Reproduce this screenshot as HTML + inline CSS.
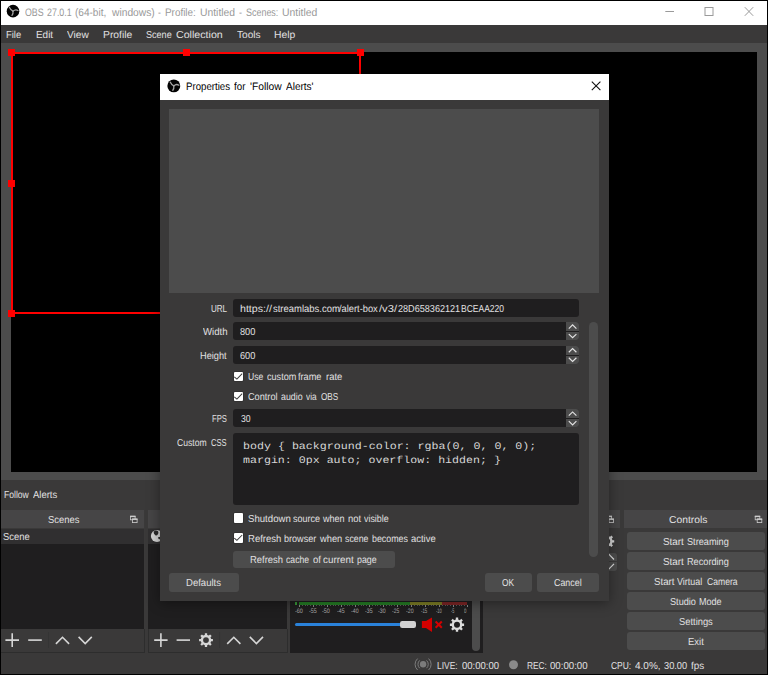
<!DOCTYPE html>
<html lang="en"><head><meta charset="utf-8"><title>OBS</title>
<style>
html,body{margin:0;padding:0}
body{width:768px;height:675px;position:relative;overflow:hidden;background:#000;font-family:"Liberation Sans",sans-serif}
div,span,svg{position:absolute;box-sizing:border-box}
.t{white-space:pre;text-rendering:geometricPrecision;transform-origin:0 0;display:block}
.s{font-family:"Liberation Sans",sans-serif}
.m{font-family:"Liberation Mono",monospace}
.btn{background:#4c4c4c;border-radius:3px}
.fld{background:#1f1e1f;border-radius:3px}
.hdr{background:#464546}
.lst{background:#1f1e1f}
.sel{background:#302f30}
.h{background:#ff0000;width:7px;height:7px}
.cb{background:#fff;width:9.6px;height:9.6px;border-radius:1px;box-shadow:0 0 0 0.6px #2c2c2c}

</style></head>
<body>
<!-- main window -->
<div id="titlebar" style="left:1px;top:1px;width:766px;height:24px;background:#fff"></div>
<div id="menubar" style="left:1px;top:25px;width:766px;height:18.3px;background:#3a3939"></div>
<div id="prevbg" style="left:1px;top:43.3px;width:766px;height:436.7px;background:#4c4c4c"></div>
<div id="preview" style="left:11px;top:52px;width:746px;height:420px;background:#000"></div>
<div id="lower" style="left:1px;top:480px;width:766px;height:194px;background:#3a3939"></div>
<!-- selection box -->
<div style="left:11px;top:52px;width:350px;height:2px;background:#f00"></div>
<div style="left:11px;top:312px;width:350px;height:2px;background:#f00"></div>
<div style="left:11px;top:52px;width:2px;height:262px;background:#f00"></div>
<div style="left:359px;top:52px;width:2px;height:262px;background:#f00"></div>
<div class="h" style="left:8px;top:49px"></div>
<div class="h" style="left:182.5px;top:49px"></div>
<div class="h" style="left:357px;top:49px"></div>
<div class="h" style="left:8px;top:179.5px"></div>
<div class="h" style="left:8px;top:310px"></div>
<!-- docks -->
<div class="hdr" style="left:1px;top:510px;width:143px;height:18px"></div>
<div class="lst" style="left:1px;top:528.5px;width:143px;height:100.5px"></div>
<div class="sel" style="left:1px;top:529px;width:143px;height:14.5px"></div>
<div class="hdr" style="left:148px;top:510px;width:139px;height:18px"></div>
<div class="lst" style="left:148px;top:528.5px;width:139px;height:100.5px"></div>
<div class="sel" style="left:148px;top:529px;width:139px;height:14.5px"></div>
<div class="hdr" style="left:290px;top:510px;width:193px;height:18px"></div>
<div class="lst" style="left:290px;top:528.5px;width:193px;height:124px"></div>
<div class="hdr" style="left:487px;top:510px;width:133.3px;height:18px"></div>
<div class="hdr" style="left:623.8px;top:510px;width:143.2px;height:18px"></div>
<!-- controls buttons -->
<div class="btn" style="left:626.8px;top:531.5px;width:138.4px;height:18.1px"></div>
<div class="btn" style="left:626.8px;top:551.5px;width:138.4px;height:18.1px"></div>
<div class="btn" style="left:626.8px;top:571.5px;width:138.4px;height:18.1px"></div>
<div class="btn" style="left:626.8px;top:591.5px;width:138.4px;height:18.1px"></div>
<div class="btn" style="left:626.8px;top:611.5px;width:138.4px;height:18.1px"></div>
<div class="btn" style="left:626.8px;top:631.5px;width:138.4px;height:18.1px"></div>
<!-- mixer -->
<div style="left:294.5px;top:602px;width:2.6px;height:2.9px;background:#4cff4c;opacity:.55"></div>
<div style="left:299px;top:602px;width:111.4px;height:2.9px;background:#267f26"></div>
<div style="left:410.4px;top:602px;width:31.6px;height:2.9px;background:#7f7f26"></div>
<div style="left:442px;top:602px;width:25px;height:2.9px;background:#7f2626"></div>
<div style="left:299px;top:605px;width:168.6px;height:1.3px;background:repeating-linear-gradient(90deg,#5c5c5c 0,#5c5c5c 0.9px,transparent 0.9px,transparent 2.8px)"></div>
<div style="left:299px;top:605px;width:168.6px;height:2.1px;background:repeating-linear-gradient(90deg,#8c8c8c 0,#8c8c8c 1px,transparent 1px,transparent 14px)"></div>
<div style="left:294.5px;top:622.8px;width:110px;height:3.6px;border-radius:1.8px;background:#2a82da"></div>
<div style="left:400px;top:621px;width:16.1px;height:7.2px;border-radius:2.2px;background:#d2d2d2"></div>
<div style="left:472.2px;top:601px;width:8px;height:49.5px;border-radius:0 0 4px 4px;background:#4c4c4c"></div>
<!-- transitions bits -->
<div class="btn" style="left:600px;top:552.7px;width:17px;height:8.3px;border-radius:0 3px 0 0"></div>
<div class="btn" style="left:600px;top:562px;width:17px;height:8.9px;border-radius:0 0 3px 0"></div>
<!-- icons under dialog -->
<svg width="768" height="675" viewBox="0 0 768 675" style="left:0;top:0" fill="none">
  <circle cx="157" cy="536" r="6.1" fill="#d4d4d4"/>
  <path d="M153.8 531.6C155 529.8 158.6 530 158.4 532.6C158.3 534.6 157 536 155.6 535.4C154.2 534.6 153.4 533 153.8 531.6Z" fill="#2a2a2a"/>
  <path d="M158 537.2L160.5 536.8L160.5 539.4L158.6 539Z" fill="#2a2a2a"/>
  <g transform="translate(606.6 515.7)" fill="none" stroke="#cdcdcd" stroke-width="0.8"><rect x="0.4" y="0.6" width="4.6" height="3.5"/><path d="M0 0.7H5.4" stroke-width="1.4"/><rect x="2.4" y="3.4" width="4.6" height="3.5" fill="#464546"/><path d="M2 3.5H7.4" stroke-width="1.4"/></g>
  <path d="M606.13 536.13L606.15 534.39L608.45 534.39L608.47 536.13L610.13 536.82L611.37 535.60L613.00 537.23L611.78 538.47L612.47 540.13L614.21 540.15L614.21 542.45L612.47 542.47L611.78 544.13L613.00 545.37L611.37 547.00L610.13 545.78L608.47 546.47L608.45 548.21L606.15 548.21L606.13 546.47L604.47 545.78L603.23 547.00L601.60 545.37L602.82 544.13L602.13 542.47L600.39 542.45L600.39 540.15L602.13 540.13L602.82 538.47L601.60 537.23L603.23 535.60L604.47 536.82ZM610.20 541.30A2.9 2.9 0 1 0 604.40 541.30A2.9 2.9 0 1 0 610.20 541.30Z" fill="#d6d6d6" fill-rule="evenodd"/>
  <path d="M604 559.5L609 554.3L614 559.5M604 563.8L609 569L614 563.8" stroke="#e0e0e0" stroke-width="1.2"/>
</svg>
<!-- dialog -->
<div id="dlg" style="left:159.6px;top:73.8px;width:449.6px;height:527.3px;background:#3a3939;box-shadow:0 2px 12px rgba(0,0,0,.4)">
 <div style="left:0;top:0;width:449.6px;height:26.2px;background:#fff"></div>
 <div id="dlgin" style="left:0.4px;top:0.2px;width:449px;height:527px">
  <div style="left:9.5px;top:35.5px;width:429.7px;height:183.3px;background:#4c4c4c"></div>
  <div class="fld" style="left:73px;top:225px;width:346.3px;height:17.7px"></div>
  <div class="fld" style="left:73px;top:248.3px;width:346.3px;height:17.8px"></div>
  <div class="fld" style="left:73px;top:272px;width:346.3px;height:17.7px"></div>
  <div class="fld" style="left:73px;top:335.4px;width:346.3px;height:17.7px"></div>
  <div class="fld" style="left:73px;top:359px;width:346.3px;height:72.5px"></div>
  <div class="btn" style="left:73.3px;top:477px;width:161.7px;height:16.8px"></div>
  <div class="btn" style="left:9.3px;top:499.3px;width:69.7px;height:18.4px"></div>
  <div class="btn" style="left:325px;top:499.3px;width:46.7px;height:18.4px"></div>
  <div class="btn" style="left:377px;top:499.3px;width:62.3px;height:18.4px"></div>
  <div class="btn" style="left:405.6px;top:248.3px;width:13.9px;height:8.7px;border-radius:0 3px 0 0"></div>
  <div class="btn" style="left:405.6px;top:258.0px;width:13.9px;height:8.1px;border-radius:0 0 3px 0"></div>
  <div class="btn" style="left:405.6px;top:272.0px;width:13.9px;height:8.7px;border-radius:0 3px 0 0"></div>
  <div class="btn" style="left:405.6px;top:281.7px;width:13.9px;height:8.1px;border-radius:0 0 3px 0"></div>
  <div class="btn" style="left:405.6px;top:335.4px;width:13.9px;height:8.7px;border-radius:0 3px 0 0"></div>
  <div class="btn" style="left:405.6px;top:345.1px;width:13.9px;height:8.1px;border-radius:0 0 3px 0"></div>
  <div class="cb" style="left:73.7px;top:297.9px"></div>
  <div class="cb" style="left:73.7px;top:317.9px"></div>
  <div class="cb" style="left:73.7px;top:439.2px"></div>
  <div class="cb" style="left:73.7px;top:459.2px"></div>
  <div style="left:429px;top:248px;width:9px;height:235.3px;background:#4c4c4c;border-radius:4.5px"></div>
 </div>
</div>
<!-- dock toolbars borders -->
<div style="left:1px;top:629px;width:143.5px;height:24px;border-right:1px solid #2d2d2d;border-bottom:1px solid #2d2d2d"></div>
<div style="left:147.5px;top:629px;width:140px;height:24px;border-left:1px solid #2d2d2d;border-right:1px solid #2d2d2d;border-bottom:1px solid #2d2d2d"></div>
<!-- icons overlay -->
<svg id="icons" width="768" height="675" viewBox="0 0 768 675" style="left:0;top:0" fill="none">
  <!-- OBS logos -->
  <g id="logo1" transform="translate(13 11.15) scale(0.975)">
    <circle r="6.45" fill="#030303"/>
    <g fill="none" stroke="#a4a4a4" stroke-width="1.3" stroke-linecap="round">
      <path d="M0 0Q-2.5 -1.2 -3.6 -3.8"/><path d="M0 0Q2.5 -2.4 5.1 -0.7"/><path d="M0 0Q0.4 2.8 -1.0 4.4"/>
    </g>
  </g>
  <g id="logo2" transform="translate(173.8 85.9)">
    <circle r="6.45" fill="#030303"/>
    <g fill="none" stroke="#a4a4a4" stroke-width="1.3" stroke-linecap="round">
      <path d="M0 0Q-2.5 -1.2 -3.6 -3.8"/><path d="M0 0Q2.5 -2.4 5.1 -0.7"/><path d="M0 0Q0.4 2.8 -1.0 4.4"/>
    </g>
  </g>
  <!-- window controls -->
  <g stroke="#9a9a9a" stroke-width="1">
    <path d="M665.3 11.5H674"/>
    <rect x="705" y="7.5" width="8" height="8"/>
    <path d="M744.8 7.2L753.2 15.8M753.2 7.2L744.8 15.8"/>
  </g>
  <path d="M591.8 81.6L600.4 90.2M600.4 81.6L591.8 90.2" stroke="#111" stroke-width="1.1"/>
  <!-- scenes toolbar -->
  <g stroke="#d6d6d6" stroke-width="1.6">
    <path d="M5.4 640.1H19M12.2 633.3V646.9"/>
    <path d="M28.2 640.1H41.8"/>
    <path d="M55.9 643.9L62.5 637.3L69.1 643.9" stroke-width="1.6"/>
    <path d="M78.6 636.9L85.2 643.5L91.8 636.9" stroke-width="1.6"/>
    <path d="M154.2 640.1H167.6M160.9 633.3V646.9"/>
    <path d="M176.6 640.1H190"/>
    <path d="M227.2 643.9L233.8 637.3L240.4 643.9" stroke-width="1.6"/>
    <path d="M249.8 636.9L256.4 643.5L263 636.9" stroke-width="1.6"/>
  </g>
  <path d="M48.5 632V648M219.6 632V648" stroke="#343434" stroke-width="1"/>

  <path d="M204.83 634.93L204.85 633.19L207.15 633.19L207.17 634.93L208.83 635.62L210.07 634.40L211.70 636.03L210.48 637.27L211.17 638.93L212.91 638.95L212.91 641.25L211.17 641.27L210.48 642.93L211.70 644.17L210.07 645.80L208.83 644.58L207.17 645.27L207.15 647.01L204.85 647.01L204.83 645.27L203.17 644.58L201.93 645.80L200.30 644.17L201.52 642.93L200.83 641.27L199.09 641.25L199.09 638.95L200.83 638.93L201.52 637.27L200.30 636.03L201.93 634.40L203.17 635.62ZM208.90 640.10A2.9 2.9 0 1 0 203.10 640.10A2.9 2.9 0 1 0 208.90 640.10Z" fill="#d6d6d6" fill-rule="evenodd"/>
  <path d="M455.81 619.43L455.82 617.60L458.18 617.60L458.19 619.43L459.88 620.13L461.19 618.84L462.86 620.51L461.57 621.82L462.27 623.51L464.10 623.52L464.10 625.88L462.27 625.89L461.57 627.58L462.86 628.89L461.19 630.56L459.88 629.27L458.19 629.97L458.18 631.80L455.82 631.80L455.81 629.97L454.12 629.27L452.81 630.56L451.14 628.89L452.43 627.58L451.73 625.89L449.90 625.88L449.90 623.52L451.73 623.51L452.43 621.82L451.14 620.51L452.81 618.84L454.12 620.13ZM460.00 624.70A3.0 3.0 0 1 0 454.00 624.70A3.0 3.0 0 1 0 460.00 624.70Z" fill="#dcdcdc" fill-rule="evenodd"/>
  <path d="M421.9 621H426L432 617.4V631.9L426 628H421.9Z" fill="#d40000"/>
  <path d="M435.6 621.5L441.8 627.7M441.8 621.5L435.6 627.7" stroke="#d40000" stroke-width="2"/>
  <g stroke="#7c7c7c" stroke-width="1" fill="none"><circle cx="423.1" cy="664.3" r="3.2" fill="#7c7c7c" stroke="none"/><path d="M419.7 660.4A5.2 5.2 0 0 0 419.7 668.2M426.5 660.4A5.2 5.2 0 0 1 426.5 668.2"/><path d="M417.6 658.6A7.7 7.7 0 0 0 417.6 670M428.6 658.6A7.7 7.7 0 0 1 428.6 670"/></g>
  <circle cx="513.5" cy="664.7" r="4.5" fill="#8a8a8a"/>
  <g transform="translate(130.1 515.7)" fill="none" stroke="#cdcdcd" stroke-width="0.8"><rect x="0.4" y="0.6" width="4.6" height="3.5"/><path d="M0 0.7H5.4" stroke-width="1.4"/><rect x="2.4" y="3.4" width="4.6" height="3.5" fill="#464546"/><path d="M2 3.5H7.4" stroke-width="1.4"/></g>
  <g transform="translate(754.8 515.7)" fill="none" stroke="#cdcdcd" stroke-width="0.8"><rect x="0.4" y="0.6" width="4.6" height="3.5"/><path d="M0 0.7H5.4" stroke-width="1.4"/><rect x="2.4" y="3.4" width="4.6" height="3.5" fill="#464546"/><path d="M2 3.5H7.4" stroke-width="1.4"/></g>
  <path d="M568.80 328.55L572.60 324.85L576.40 328.55M568.80 334.05L572.60 337.75L576.40 334.05" stroke="#e4e4e4" stroke-width="1.15" fill="none"/>
  <path d="M568.80 352.25L572.60 348.55L576.40 352.25M568.80 357.75L572.60 361.45L576.40 357.75" stroke="#e4e4e4" stroke-width="1.15" fill="none"/>
  <path d="M568.80 415.65L572.60 411.95L576.40 415.65M568.80 421.15L572.60 424.85L576.40 421.15" stroke="#e4e4e4" stroke-width="1.15" fill="none"/>
  <path d="M234.30 376.90L236.90 379.10L242.20 373.70" stroke="#3c3c3c" stroke-width="1.05" fill="none"/>
  <path d="M234.30 396.90L236.90 399.10L242.20 393.70" stroke="#3c3c3c" stroke-width="1.05" fill="none"/>
  <path d="M234.30 538.20L236.90 540.40L242.20 535.00" stroke="#3c3c3c" stroke-width="1.05" fill="none"/>
</svg>

<div id="texts">
<span class="t s" style="left:25.00px;top:7px;font-size:10.9px;line-height:12px;color:#999999;transform:scaleX(0.8093)">OBS</span>
<span class="t s" style="left:46.60px;top:7px;font-size:10.9px;line-height:12px;color:#999999;transform:scaleX(0.8156)">27.0.1</span>
<span class="t s" style="left:75.00px;top:7px;font-size:10.9px;line-height:12px;color:#999999;transform:scaleX(0.9227)">(64-bit,</span>
<span class="t s" style="left:111.74px;top:7px;font-size:10.9px;line-height:12px;color:#999999;transform:scaleX(0.9418)">windows)</span>
<span class="t s" style="left:158.10px;top:7px;font-size:10.9px;line-height:12px;color:#999999;transform:scaleX(0.8000)">-</span>
<span class="t s" style="left:164.80px;top:7px;font-size:10.9px;line-height:12px;color:#999999;transform:scaleX(0.9094)">Profile:</span>
<span class="t s" style="left:199.70px;top:7px;font-size:10.9px;line-height:12px;color:#999999;transform:scaleX(0.9493)">Untitled</span>
<span class="t s" style="left:239.20px;top:7px;font-size:10.9px;line-height:12px;color:#999999;transform:scaleX(0.8250)">-</span>
<span class="t s" style="left:245.60px;top:7px;font-size:10.9px;line-height:12px;color:#999999;transform:scaleX(0.8214)">Scenes:</span>
<span class="t s" style="left:282.00px;top:7px;font-size:10.9px;line-height:12px;color:#999999;transform:scaleX(0.9547)">Untitled</span>
<span class="t s" style="left:185.50px;top:81px;font-size:10.8px;line-height:12px;color:#000000;transform:scaleX(0.8954)">Properties</span>
<span class="t s" style="left:233.80px;top:81px;font-size:10.8px;line-height:12px;color:#000000;transform:scaleX(0.9074)">for</span>
<span class="t s" style="left:250.20px;top:81px;font-size:10.8px;line-height:12px;color:#000000;transform:scaleX(0.9533)">'Follow</span>
<span class="t s" style="left:285.70px;top:81px;font-size:10.8px;line-height:12px;color:#000000;transform:scaleX(0.9257)">Alerts'</span>
<span class="t s" style="left:6.30px;top:30px;font-size:10.1px;line-height:11px;color:#e1e0e1;transform:scaleX(0.9309)">File</span>
<span class="t s" style="left:35.70px;top:30px;font-size:10.1px;line-height:11px;color:#e1e0e1;transform:scaleX(0.9836)">Edit</span>
<span class="t s" style="left:66.70px;top:30px;font-size:10.1px;line-height:11px;color:#e1e0e1;transform:scaleX(1.0042)">View</span>
<span class="t s" style="left:102.70px;top:30px;font-size:10.1px;line-height:11px;color:#e1e0e1;transform:scaleX(1.0243)">Profile</span>
<span class="t s" style="left:146.25px;top:30px;font-size:10.1px;line-height:11px;color:#e1e0e1;transform:scaleX(0.8981)">Scene</span>
<span class="t s" style="left:176.20px;top:30px;font-size:10.1px;line-height:11px;color:#e1e0e1;transform:scaleX(1.0547)">Collection</span>
<span class="t s" style="left:236.50px;top:30px;font-size:10.1px;line-height:11px;color:#e1e0e1;transform:scaleX(0.9993)">Tools</span>
<span class="t s" style="left:273.70px;top:30px;font-size:10.1px;line-height:11px;color:#e1e0e1;transform:scaleX(1.0262)">Help</span>
<span class="t s" style="left:210.60px;top:304px;font-size:10.1px;line-height:11px;color:#e1e0e1;transform:scaleX(0.7969)">URL</span>
<span class="t s" style="left:203.00px;top:327px;font-size:10.1px;line-height:11px;color:#e1e0e1;transform:scaleX(0.9529)">Width</span>
<span class="t s" style="left:200.20px;top:351px;font-size:10.1px;line-height:11px;color:#e1e0e1;transform:scaleX(0.9124)">Height</span>
<span class="t s" style="left:211.90px;top:414px;font-size:10.1px;line-height:11px;color:#e1e0e1;transform:scaleX(0.7589)">FPS</span>
<span class="t s" style="left:177.00px;top:438px;font-size:10.1px;line-height:11px;color:#e1e0e1;transform:scaleX(0.8511)">Custom</span>
<span class="t s" style="left:210.90px;top:438px;font-size:10.1px;line-height:11px;color:#e1e0e1;transform:scaleX(0.7468)">CSS</span>
<span class="t s" style="left:240.00px;top:304px;font-size:10.1px;line-height:11px;color:#e1e0e1;transform:scaleX(1.0527)">https://</span>
<span class="t s" style="left:272.60px;top:304px;font-size:10.1px;line-height:11px;color:#e1e0e1;transform:scaleX(0.9375)">streamlabs.com</span>
<span class="t s" style="left:339.30px;top:304px;font-size:10.1px;line-height:11px;color:#e1e0e1;transform:scaleX(0.9208)">/alert-box</span>
<span class="t s" style="left:378.50px;top:304px;font-size:10.1px;line-height:11px;color:#e1e0e1;transform:scaleX(1.1115)">/v3/</span>
<span class="t s" style="left:397.50px;top:304px;font-size:10.1px;line-height:11px;color:#e1e0e1;transform:scaleX(0.9002)">28D658362121</span>
<span class="t s" style="left:460.60px;top:304px;font-size:10.1px;line-height:11px;color:#e1e0e1;transform:scaleX(0.8417)">BCEAA220</span>
<span class="t s" style="left:240.30px;top:327px;font-size:10.1px;line-height:11px;color:#e1e0e1;transform:scaleX(0.9113)">800</span>
<span class="t s" style="left:240.30px;top:351px;font-size:10.1px;line-height:11px;color:#e1e0e1;transform:scaleX(0.9113)">600</span>
<span class="t s" style="left:240.60px;top:414px;font-size:10.1px;line-height:11px;color:#e1e0e1;transform:scaleX(0.8524)">30</span>
<span class="t s" style="left:248.00px;top:372px;font-size:10.1px;line-height:11px;color:#e1e0e1;transform:scaleX(0.8508)">Use</span>
<span class="t s" style="left:266.70px;top:372px;font-size:10.1px;line-height:11px;color:#e1e0e1;transform:scaleX(0.8996)">custom</span>
<span class="t s" style="left:298.40px;top:372px;font-size:10.1px;line-height:11px;color:#e1e0e1;transform:scaleX(0.9088)">frame</span>
<span class="t s" style="left:325.60px;top:372px;font-size:10.1px;line-height:11px;color:#e1e0e1;transform:scaleX(0.9337)">rate</span>
<span class="t s" style="left:248.40px;top:392px;font-size:10.1px;line-height:11px;color:#e1e0e1;transform:scaleX(0.9072)">Control</span>
<span class="t s" style="left:280.80px;top:392px;font-size:10.1px;line-height:11px;color:#e1e0e1;transform:scaleX(0.8731)">audio</span>
<span class="t s" style="left:305.80px;top:392px;font-size:10.1px;line-height:11px;color:#e1e0e1;transform:scaleX(0.8202)">via</span>
<span class="t s" style="left:320.60px;top:392px;font-size:10.1px;line-height:11px;color:#e1e0e1;transform:scaleX(0.8108)">OBS</span>
<span class="t s" style="left:248.00px;top:514px;font-size:10.1px;line-height:11px;color:#e1e0e1;transform:scaleX(0.9530)">Shutdown</span>
<span class="t s" style="left:292.50px;top:514px;font-size:10.1px;line-height:11px;color:#e1e0e1;transform:scaleX(0.8898)">source</span>
<span class="t s" style="left:323.40px;top:514px;font-size:10.1px;line-height:11px;color:#e1e0e1;transform:scaleX(0.8973)">when</span>
<span class="t s" style="left:348.00px;top:514px;font-size:10.1px;line-height:11px;color:#e1e0e1;transform:scaleX(0.9313)">not</span>
<span class="t s" style="left:364.40px;top:514px;font-size:10.1px;line-height:11px;color:#e1e0e1;transform:scaleX(0.8792)">visible</span>
<span class="t s" style="left:248.00px;top:534px;font-size:10.1px;line-height:11px;color:#e1e0e1;transform:scaleX(0.9444)">Refresh</span>
<span class="t s" style="left:283.90px;top:534px;font-size:10.1px;line-height:11px;color:#e1e0e1;transform:scaleX(0.8977)">browser</span>
<span class="t s" style="left:320.32px;top:534px;font-size:10.1px;line-height:11px;color:#e1e0e1;transform:scaleX(0.9218)">when</span>
<span class="t s" style="left:345.30px;top:534px;font-size:10.1px;line-height:11px;color:#e1e0e1;transform:scaleX(0.8675)">scene</span>
<span class="t s" style="left:372.20px;top:534px;font-size:10.1px;line-height:11px;color:#e1e0e1;transform:scaleX(0.8775)">becomes</span>
<span class="t s" style="left:411.25px;top:534px;font-size:10.1px;line-height:11px;color:#e1e0e1;transform:scaleX(0.9344)">active</span>
<span class="t s" style="left:249.50px;top:555px;font-size:10.1px;line-height:11px;color:#e1e0e1;transform:scaleX(0.9329)">Refresh</span>
<span class="t s" style="left:285.50px;top:555px;font-size:10.1px;line-height:11px;color:#e1e0e1;transform:scaleX(0.8565)">cache</span>
<span class="t s" style="left:312.50px;top:555px;font-size:10.1px;line-height:11px;color:#e1e0e1;transform:scaleX(0.9404)">of</span>
<span class="t s" style="left:323.40px;top:555px;font-size:10.1px;line-height:11px;color:#e1e0e1;transform:scaleX(0.9744)">current</span>
<span class="t s" style="left:356.90px;top:555px;font-size:10.1px;line-height:11px;color:#e1e0e1;transform:scaleX(0.8756)">page</span>
<span class="t s" style="left:186.25px;top:578px;font-size:10.1px;line-height:11px;color:#e1e0e1;transform:scaleX(0.9464)">Defaults</span>
<span class="t s" style="left:501.90px;top:578px;font-size:10.1px;line-height:11px;color:#e1e0e1;transform:scaleX(0.8215)">OK</span>
<span class="t s" style="left:553.80px;top:578px;font-size:10.1px;line-height:11px;color:#e1e0e1;transform:scaleX(0.8788)">Cancel</span>
<span class="t m" style="left:243.40px;top:442px;font-size:10.2px;line-height:11px;color:#d6d6d6;transform:scaleX(1.1423)">body { background-color: rgba(0, 0, 0, 0);</span>
<span class="t m" style="left:243.40px;top:456px;font-size:10.2px;line-height:11px;color:#d6d6d6;transform:scaleX(1.1400)">margin: 0px auto; overflow: hidden; }</span>
<span class="t s" style="left:3.90px;top:490px;font-size:10.1px;line-height:11px;color:#e1e0e1;transform:scaleX(0.8501)">Follow</span>
<span class="t s" style="left:32.80px;top:490px;font-size:10.1px;line-height:11px;color:#e1e0e1;transform:scaleX(0.9396)">Alerts</span>
<span class="t s" style="left:47.90px;top:515px;font-size:10.1px;line-height:11px;color:#e1e0e1;transform:scaleX(0.9310)">Scenes</span>
<span class="t s" style="left:2.60px;top:532px;font-size:10.1px;line-height:11px;color:#e1e0e1;transform:scaleX(0.9308)">Scene</span>
<span class="t s" style="left:668.60px;top:515px;font-size:10.1px;line-height:11px;color:#e1e0e1;transform:scaleX(1.0203)">Controls</span>
<span class="t s" style="left:663.40px;top:537px;font-size:10.1px;line-height:11px;color:#e1e0e1;transform:scaleX(0.9762)">Start</span>
<span class="t s" style="left:686.80px;top:537px;font-size:10.1px;line-height:11px;color:#e1e0e1;transform:scaleX(0.9077)">Streaming</span>
<span class="t s" style="left:663.40px;top:557px;font-size:10.1px;line-height:11px;color:#e1e0e1;transform:scaleX(0.9762)">Start</span>
<span class="t s" style="left:686.80px;top:557px;font-size:10.1px;line-height:11px;color:#e1e0e1;transform:scaleX(0.9076)">Recording</span>
<span class="t s" style="left:654.00px;top:577px;font-size:10.1px;line-height:11px;color:#e1e0e1;transform:scaleX(0.9576)">Start</span>
<span class="t s" style="left:677.40px;top:577px;font-size:10.1px;line-height:11px;color:#e1e0e1;transform:scaleX(0.8870)">Virtual</span>
<span class="t s" style="left:706.50px;top:577px;font-size:10.1px;line-height:11px;color:#e1e0e1;transform:scaleX(0.8516)">Camera</span>
<span class="t s" style="left:669.90px;top:597px;font-size:10.1px;line-height:11px;color:#e1e0e1;transform:scaleX(0.9067)">Studio</span>
<span class="t s" style="left:698.60px;top:597px;font-size:10.1px;line-height:11px;color:#e1e0e1;transform:scaleX(0.8933)">Mode</span>
<span class="t s" style="left:678.75px;top:617px;font-size:10.1px;line-height:11px;color:#e1e0e1;transform:scaleX(0.9266)">Settings</span>
<span class="t s" style="left:687.75px;top:637px;font-size:10.1px;line-height:11px;color:#e1e0e1;transform:scaleX(0.9370)">Exit</span>
<span class="t s" style="left:437.20px;top:661px;font-size:10.1px;line-height:11px;color:#e1e0e1;transform:scaleX(0.8374)">LIVE:</span>
<span class="t s" style="left:461.50px;top:661px;font-size:10.1px;line-height:11px;color:#e1e0e1;transform:scaleX(0.9401)">00:00:00</span>
<span class="t s" style="left:526.80px;top:661px;font-size:10.1px;line-height:11px;color:#e1e0e1;transform:scaleX(0.8236)">REC:</span>
<span class="t s" style="left:550.30px;top:661px;font-size:10.1px;line-height:11px;color:#e1e0e1;transform:scaleX(0.9552)">00:00:00</span>
<span class="t s" style="left:611.10px;top:661px;font-size:10.1px;line-height:11px;color:#e1e0e1;transform:scaleX(0.8365)">CPU:</span>
<span class="t s" style="left:635.25px;top:661px;font-size:10.1px;line-height:11px;color:#e1e0e1;transform:scaleX(0.9897)">4.0%,</span>
<span class="t s" style="left:664.30px;top:661px;font-size:10.1px;line-height:11px;color:#e1e0e1;transform:scaleX(0.9144)">30.00</span>
<span class="t s" style="left:691.10px;top:661px;font-size:10.1px;line-height:11px;color:#e1e0e1;transform:scaleX(0.9800)">fps</span>
<span class="t s" style="left:294.80px;top:608px;font-size:6.4px;line-height:7px;color:#a2a2a2;transform:scaleX(0.8572)">-60</span>
<span class="t s" style="left:308.90px;top:608px;font-size:6.4px;line-height:7px;color:#a2a2a2;transform:scaleX(0.8366)">-55</span>
<span class="t s" style="left:322.40px;top:608px;font-size:6.4px;line-height:7px;color:#a2a2a2;transform:scaleX(0.8572)">-50</span>
<span class="t s" style="left:336.70px;top:608px;font-size:6.4px;line-height:7px;color:#a2a2a2;transform:scaleX(0.8263)">-45</span>
<span class="t s" style="left:350.80px;top:608px;font-size:6.4px;line-height:7px;color:#a2a2a2;transform:scaleX(0.8159)">-40</span>
<span class="t s" style="left:365.10px;top:608px;font-size:6.4px;line-height:7px;color:#a2a2a2;transform:scaleX(0.8159)">-35</span>
<span class="t s" style="left:378.30px;top:608px;font-size:6.4px;line-height:7px;color:#a2a2a2;transform:scaleX(0.8159)">-30</span>
<span class="t s" style="left:392.30px;top:608px;font-size:6.4px;line-height:7px;color:#a2a2a2;transform:scaleX(0.7849)">-25</span>
<span class="t s" style="left:406.30px;top:608px;font-size:6.4px;line-height:7px;color:#a2a2a2;transform:scaleX(0.8159)">-20</span>
<span class="t s" style="left:421.30px;top:608px;font-size:6.4px;line-height:7px;color:#a2a2a2;transform:scaleX(0.6817)">-15</span>
<span class="t s" style="left:435.60px;top:608px;font-size:6.4px;line-height:7px;color:#a2a2a2;transform:scaleX(0.6197)">-10</span>
<span class="t s" style="left:450.60px;top:608px;font-size:6.4px;line-height:7px;color:#a2a2a2;transform:scaleX(0.5875)">-5</span>
<span class="t s" style="left:463.60px;top:608px;font-size:6.4px;line-height:7px;color:#a2a2a2;transform:scaleX(0.6750)">0</span>
</div>
</body></html>
